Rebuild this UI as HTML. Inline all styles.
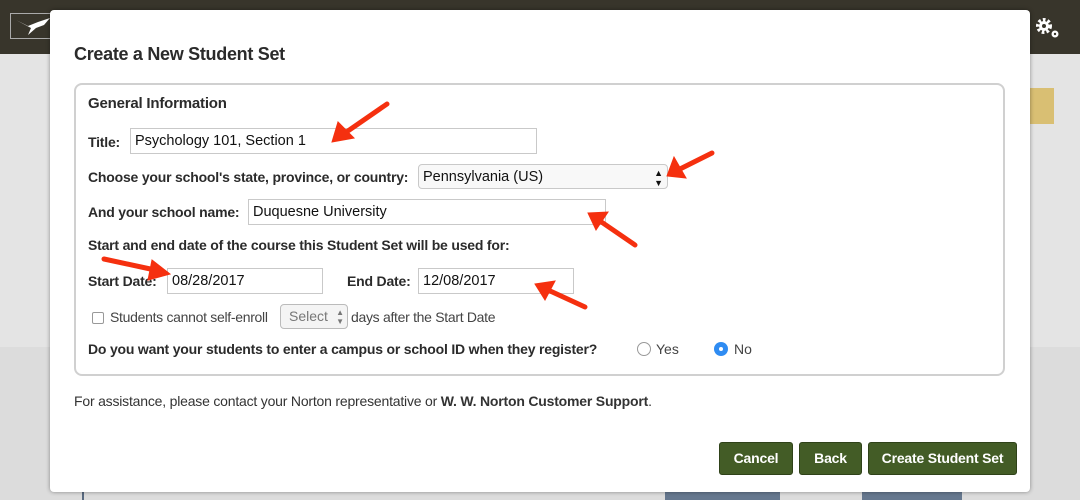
<!DOCTYPE html>
<html><head><style>
*{box-sizing:border-box;margin:0;padding:0}
body{width:1080px;height:500px;overflow:hidden;position:relative;background:#e4e4e4;font-family:"Liberation Sans",sans-serif;color:#2b2b2b}
.a{position:absolute;white-space:nowrap}
.b{font-weight:bold;font-size:14px;letter-spacing:-0.2px}
.in{position:absolute;border:1px solid #c9c9c9;background:#fff;font-size:14.5px;padding:0 4px;line-height:24px;color:#111}
.btn{position:absolute;top:442px;height:33px;background:#435c26;border:1px solid #2f4219;border-radius:3px;color:#fff;font-weight:bold;font-size:14px;text-align:center;line-height:31px;letter-spacing:-0.2px}
</style></head><body>
<div class="a" style="left:0;top:0;width:1080px;height:54px;background:#38352b"></div>
<div class="a" style="left:0;top:347px;width:1080px;height:153px;background:#dcdcdc"></div>
<div class="a" style="left:10px;top:13px;width:44px;height:26px;border:1px solid #aaa"></div>
<svg class="a" style="left:14px;top:16px" width="40" height="20"><path d="M2 4 L14 10 L24 6 L36 2 L30 9 L22 12 L14 19 L17 12 Z" fill="#fff"/></svg>
<div class="a" style="left:1002px;top:88px;width:52px;height:36px;background:#d9bf73;font-size:15px;line-height:36px;padding-left:8px;color:#333">ns</div>
<svg class="a" style="left:1034px;top:16px" width="30" height="24"><circle cx="10" cy="10" r="6" fill="none" stroke="#fff" stroke-width="4" stroke-dasharray="2.5 2"/><circle cx="10" cy="10" r="5" fill="#fff"/><circle cx="10" cy="10" r="2" fill="#38352b"/><circle cx="21" cy="18" r="3.5" fill="#fff"/><circle cx="21" cy="18" r="1.2" fill="#38352b"/></svg>
<div class="a" style="left:82px;top:488px;width:600px;height:12px;border-left:2px solid #596a80"></div>
<div class="a" style="left:665px;top:490px;width:115px;height:10px;background:#66788f"></div>
<div class="a" style="left:862px;top:490px;width:100px;height:10px;background:#66788f"></div>
<div class="a" style="left:50px;top:10px;width:980px;height:482px;background:#fff;border-radius:4px;box-shadow:0 0 4px rgba(0,0,0,.4)"></div>
<div class="a" style="left:74px;top:44px;font-size:18px;font-weight:bold;letter-spacing:-0.3px">Create a New Student Set</div>
<div class="a" style="left:74px;top:83px;width:931px;height:293px;border:2px solid #d0d0d0;border-radius:8px"></div>
<div class="a b" style="left:88px;top:95px;font-size:15px">General Information</div>
<div class="a b" style="left:88px;top:134px">Title:</div>
<div class="in" style="left:130px;top:128px;width:407px;height:26px">Psychology 101, Section 1</div>
<div class="a b" style="left:88px;top:169px">Choose your school's state, province, or country:</div>
<div class="in" style="left:418px;top:164px;width:250px;height:25px;border-radius:4px;background:#f8f8f8">Pennsylvania (US)<span style="position:absolute;right:4px;top:0;font-size:9px;line-height:10px;top:3px">▲<br>▼</span></div>
<div class="a b" style="left:88px;top:204px">And your school name:</div>
<div class="in" style="left:248px;top:199px;width:358px;height:26px">Duquesne University</div>
<div class="a b" style="left:88px;top:237px">Start and end date of the course this Student Set will be used for:</div>
<div class="a b" style="left:88px;top:273px">Start Date:</div>
<div class="in" style="left:167px;top:268px;width:156px;height:26px">08/28/2017</div>
<div class="a b" style="left:347px;top:273px">End Date:</div>
<div class="in" style="left:418px;top:268px;width:156px;height:26px">12/08/2017</div>
<div class="a" style="left:92px;top:312px;width:12px;height:12px;border:1px solid #999;border-radius:2px"></div>
<div class="a" style="left:110px;top:309px;font-size:14px;color:#444;letter-spacing:-0.3px">Students cannot self-enroll</div>
<div class="a" style="left:280px;top:304px;width:68px;height:25px;border:1px solid #bbb;border-radius:4px;background:#f4f4f4;font-size:14px;color:#777;line-height:23px;padding-left:8px">Select<span style="position:absolute;right:3px;top:3px;font-size:8px;line-height:9px">▲<br>▼</span></div>
<div class="a" style="left:351px;top:309px;font-size:14px;color:#444;letter-spacing:-0.3px">days after the Start Date</div>
<div class="a b" style="left:88px;top:341px">Do you want your students to enter a campus or school ID when they register?</div>
<div class="a" style="left:637px;top:342px;width:14px;height:14px;border:1px solid #999;border-radius:50%"></div>
<div class="a" style="left:656px;top:341px;font-size:14px;color:#444">Yes</div>
<div class="a" style="left:714px;top:342px;width:14px;height:14px;background:#2f8cf2;border-radius:50%"><div style="margin:5px;width:4px;height:4px;background:#fff;border-radius:50%"></div></div>
<div class="a" style="left:734px;top:341px;font-size:14px;color:#444">No</div>
<div class="a" style="left:74px;top:393px;font-size:14px;color:#333;letter-spacing:-0.2px">For assistance, please contact your Norton representative or <b>W. W. Norton Customer Support</b>.</div>
<div class="btn" style="left:719px;width:74px">Cancel</div>
<div class="btn" style="left:799px;width:63px">Back</div>
<div class="btn" style="left:868px;width:149px">Create Student Set</div>
<svg class="a" style="left:0;top:0" width="1080" height="500">
<g stroke="#f5300f" stroke-width="5" stroke-linecap="round" fill="#f5300f">
<line x1="387" y1="104" x2="345" y2="133"/><polygon points="332,142 338,122 354,138" stroke-width="1"/>
<line x1="712" y1="153" x2="680" y2="169"/><polygon points="667,176 674,157 686,178" stroke-width="1"/>
<line x1="635" y1="245" x2="600" y2="221"/><polygon points="588,213 608,212 596,230" stroke-width="1"/>
<line x1="104" y1="259" x2="155" y2="270"/><polygon points="170,274 152,260 148,280" stroke-width="1"/>
<line x1="585" y1="307" x2="548" y2="290"/><polygon points="535,284 555,281 545,300" stroke-width="1"/>
</g></svg>
</body></html>
